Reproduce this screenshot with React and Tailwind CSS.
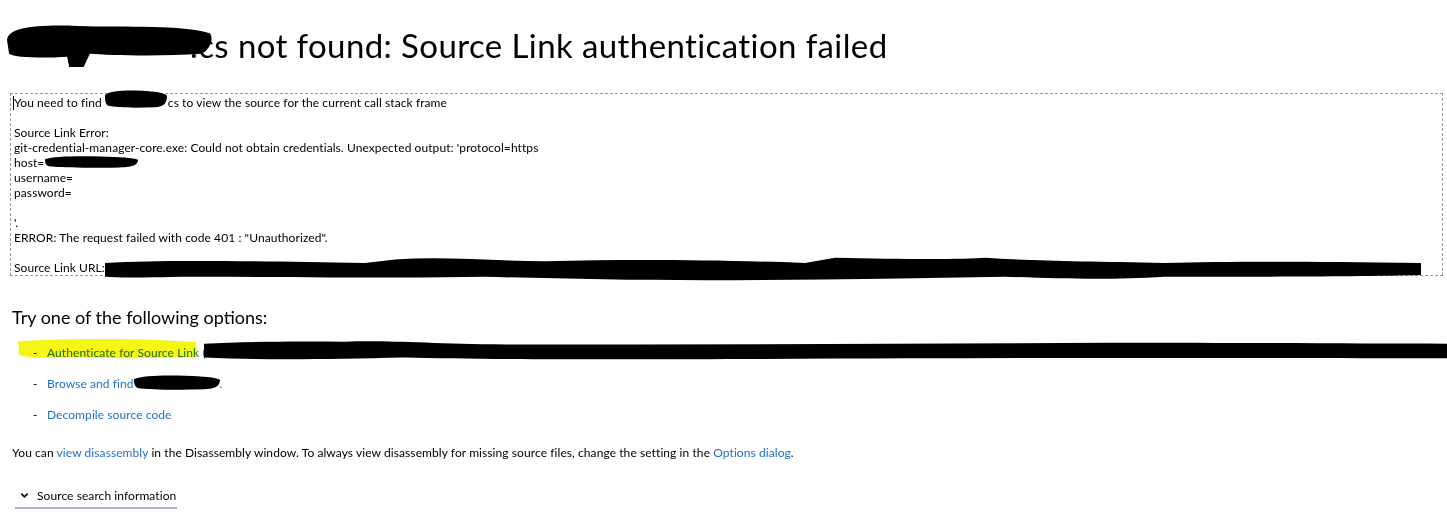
import React from 'react';
import { ChevronDown } from 'lucide-react';

// black marker strokes that hide file names and urls
const Blot = ({ className, d, vb }) => (
    <svg className={`absolute pointer-events-none ${className}`} viewBox={vb} preserveAspectRatio="none" aria-hidden="true">
        <path d={d} fill="#000" />
    </svg>
);

const Redacted = ({ className, blot, d, vb }) => (
    <span className={`relative inline-block align-baseline ${className}`}>
        &nbsp;
        <Blot className={blot} d={d} vb={vb} />
    </span>
);

const blobD = 'M2 24 C2 6 30 2 70 4 C120 6 170 2 198 14 C202 22 198 36 190 42 C150 46 100 44 82 42 L76 60 L62 60 L60 46 C40 48 10 48 4 42 Z';
const smallD = 'M0 6 C10 1 30 0 60 1 C80 2 95 3 100 7 C100 15 96 21 80 21 C50 22 20 22 4 19 C0 16 0 10 0 6 Z';
const longD =
    'M0 8 C60 4 150 6 260 8 L290 4 C340 0 390 6 440 6 C520 4 600 4 700 8 L730 2 C800 4 860 4 880 2 C930 6 980 6 1060 8 C1120 6 1200 6 1316 8 L1316 22 C1250 24 1150 24 1060 24 C1000 28 960 26 900 24 C800 26 700 28 600 28 C520 28 450 26 380 24 C300 26 200 24 100 24 C50 24 20 26 0 24 Z';
const authD =
    'M0 4 C40 2 90 1 140 2 C180 0 220 4 300 5 C500 5 700 4 900 3 C1050 3 1150 4 1242 4 L1242 20 C1100 20 900 19 700 20 C500 21 300 22 200 19 C120 21 60 22 0 19 Z';

const Link = ({ children }) => <span className="text-[#1e6fcf] cursor-pointer">{children}</span>;

const Option = ({ children }) => (
    <li className="flex items-center h-[15px]">
        <span className="w-[14px] text-black">-</span>
        {children}
    </li>
);

export default function App() {
    return (
        <div className="relative w-full h-[515px] overflow-hidden bg-white text-black text-[12px] leading-[15px] tracking-[0.08px] font-['Segoe_UI','Lato','Liberation_Sans',sans-serif]">
            {/* heading */}
            <h1 className="relative mt-[25px] ml-[12px] text-[33px] leading-[40px] tracking-[0.4px] font-normal whitespace-nowrap">
                <span className="inline-block w-[178px]" />
                .cs not found: Source Link authentication failed
                <Blot className="-left-[7px] -top-[2px] w-[207px] h-[44px]" d={blobD} vb="0 0 200 60" />
            </h1>

            {/* error details */}
            <div className="mt-[28px] ml-[10px] mr-[4px] border border-dashed border-[#9a9a9a] pl-[3px] pt-[1px] whitespace-pre">
                <div className="relative">
                    <span className="absolute -left-[1px] top-[1px] h-[14px] w-px bg-black" />
                    You need to find<Redacted className="w-[66px]" blot="left-[3px] -top-[5px] w-[62px] h-[18px]" d={smallD} vb="0 0 100 22" />cs to view the source for the current call stack frame
                </div>
                <div>&nbsp;</div>
                <div>Source Link Error:</div>
                <div>git-credential-manager-core.exe: Could not obtain credentials. Unexpected output: 'protocol=https</div>
                <div className="relative">
                    host=
                    <Blot className="left-[31px] top-[1px] w-[93px] h-[12px]" d={smallD} vb="0 0 100 22" />
                </div>
                <div>username=</div>
                <div>password=</div>
                <div>&nbsp;</div>
                <div>'.</div>
                <div>ERROR: The request failed with code 401 : "Unauthorized".</div>
                <div>&nbsp;</div>
                <div className="relative">
                    Source Link URL:
                    <Blot className="left-[91px] -top-[4px] w-[1316px] h-[26px]" d={longD} vb="0 0 1316 30" />
                </div>
            </div>

            {/* options */}
            <h2 className="mt-[29px] ml-[12px] text-[18px] leading-[24px] tracking-normal font-normal">Try one of the following options:</h2>
            <ul className="mt-[16px] ml-[33px] flex flex-col gap-[16px]">
                <Option>
                    <span className="relative">
                        <svg className="absolute -left-[29px] -top-[7px] w-[180px] h-[21px] mix-blend-multiply" viewBox="0 0 180 21" preserveAspectRatio="none" aria-hidden="true">
                            <path d="M0 3 C40 1 90 0 140 2 L178 4 L179 19 C140 20 90 21 60 19 C30 20 10 20 1 17 Z" fill="#f5f516" />
                        </svg>
                        <span className="relative mix-blend-multiply">
                            <Link>Authenticate for Source Link (</Link>
                        </span>
                        <Blot className="left-[157px] -top-[5px] w-[1250px] h-[22px]" d={authD} vb="0 0 1242 24" />
                    </span>
                </Option>
                <Option>
                    <Link>Browse and find<Redacted className="w-[86px]" blot="left-[0px] -top-[1px] w-[86px] h-[15px]" d={smallD} vb="0 0 100 22" />.</Link>
                </Option>
                <Option>
                    <Link>Decompile source code</Link>
                </Option>
            </ul>

            <p className="mt-[23px] ml-[12px]">
                You can <Link>view disassembly</Link> in the Disassembly window. To always view disassembly for missing source files, change the setting in the <Link>Options dialog</Link>.
            </p>

            {/* collapsible section */}
            <div className="mt-[28px] ml-[15px] w-[162px] border-b-2 border-[#a9b4c6] pb-[4px] flex items-center whitespace-nowrap">
                <ChevronDown size={11} strokeWidth={3.5} className="ml-[4px] mr-[7px] text-black shrink-0" />
                <span>Source search information</span>
            </div>
        </div>
    );
}
